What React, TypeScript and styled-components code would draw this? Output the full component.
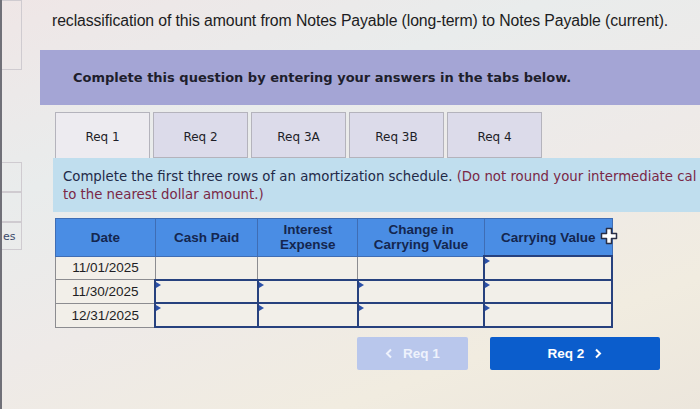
import React from "react";
import styled, { createGlobalStyle } from "styled-components";

const Global = createGlobalStyle`
  html, body { margin: 0; padding: 0; }
  body { font-family: "Liberation Sans", Arial, sans-serif; }
`;

const Page = styled.div`
  display: flex;
  width: 700px;
  height: 409px;
  overflow: hidden;
  background: linear-gradient(160deg, #efe6e6 0%, #e9ecec 30%, #eeeae8 55%, #f1ece0 80%, #ece6dc 100%);
`;

const Sidebar = styled.div`
  width: 20px;
  flex-shrink: 0;
  border-left: 2px solid #707078;
  display: flex;
  flex-direction: column;
`;

const SideBox = styled.div<{ $h: number; $mt?: number }>`
  height: ${(p) => p.$h}px;
  margin-top: ${(p) => p.$mt ?? 0}px;
  border: 1px solid #cfcbd0;
  border-left: none;
  box-sizing: border-box;
  overflow: hidden;
  display: flex;
  align-items: center;
  padding-left: 1px;
  font-family: "DejaVu Sans", Verdana, sans-serif;
  font-size: 11px;
  color: #3a4a6a;
  white-space: nowrap;
`;

const Main = styled.div`
  flex: 1;
  min-width: 0;
  padding-left: 18px;
  overflow: hidden;
`;

const Intro = styled.div`
  margin: 12px 0 0 12px;
  font-family: "Liberation Sans", Arial, sans-serif;
  font-size: 15.8px;
  line-height: 18px;
  color: #1c1c22;
  white-space: nowrap;
  letter-spacing: -0.1px;
`;

const Banner = styled.div`
  margin-top: 20px;
  width: 720px;
  height: 55px;
  box-sizing: border-box;
  padding-left: 33px;
  display: flex;
  align-items: center;
  background: #a4a5d5;
  font-family: "DejaVu Sans", Verdana, sans-serif;
  font-weight: bold;
  font-size: 13px;
  color: #1e1e2c;
  white-space: nowrap;
`;

const Tabs = styled.div`
  margin: 7px 0 0 15px;
  display: flex;
  gap: 3px;
`;

const Tab = styled.div<{ $active?: boolean }>`
  width: 95px;
  height: 46px;
  box-sizing: border-box;
  border: 1px solid #b4b3bc;
  border-bottom: ${(p) => (p.$active ? "none" : "1px solid #b4b3bc")};
  background: ${(p) => (p.$active ? "#edebf0" : "#dcdbea")};
  display: flex;
  align-items: center;
  justify-content: center;
  padding-top: 3px;
  font-family: "DejaVu Sans", Verdana, sans-serif;
  font-size: 12px;
  color: #1e1e28;
`;

const Instructions = styled.div`
  margin-left: 13px;
  width: 720px;
  height: 54px;
  box-sizing: border-box;
  padding: 10px 10px 8px;
  background: #c0deee;
  font-family: "DejaVu Sans", Verdana, sans-serif;
  font-size: 13.3px;
  line-height: 18px;
  color: #1f2a48;
  white-space: nowrap;
  overflow: hidden;
`;

const Note = styled.span`
  color: #7a2846;
`;

const TableWrap = styled.div`
  position: relative;
  margin: 6px 0 0 15px;
  width: 558px;
`;

const Table = styled.table`
  border-collapse: collapse;
  table-layout: fixed;
  font-family: "Liberation Sans", Arial, sans-serif;
`;

const Th = styled.th<{ $w: number }>`
  width: ${(p) => p.$w}px;
  height: 36px;
  padding: 0;
  background: #4a8de4;
  border: 1px solid #3f6db4;
  color: #14264f;
  font-size: 13.5px;
  font-weight: bold;
  line-height: 15px;
  text-align: center;
`;

const Td = styled.td<{ $input?: boolean }>`
  position: relative;
  height: 21.7px;
  padding: 0;
  background: #f2efe9;
  border: ${(p) => (p.$input ? "2px solid #27417e" : "1px solid #8c8c90")};
  font-size: 13.5px;
  color: #1e1e24;
  text-align: center;
  &::before {
    content: "";
    display: ${(p) => (p.$input ? "block" : "none")};
    position: absolute;
    left: 0;
    top: 0;
    border-top: 3px solid transparent;
    border-bottom: 3px solid transparent;
    border-left: 5px solid #2b50a8;
    margin-top: 1px;
  }
`;

const Plus = styled.svg`
  position: absolute;
  left: 545px;
  top: 9px;
`;

const Buttons = styled.div`
  margin: 9px 0 0 317px;
  display: flex;
  gap: 22px;
  align-items: flex-start;
`;

const NavButton = styled.div<{ $w: number; $disabled?: boolean }>`
  width: ${(p) => p.$w}px;
  height: 33px;
  border-radius: 2px;
  background: ${(p) => (p.$disabled ? "#b9c7ec" : "#0b5dcc")};
  color: ${(p) => (p.$disabled ? "#eef2fc" : "#ffffff")};
  display: flex;
  align-items: center;
  justify-content: center;
  gap: 10px;
  font-family: "Liberation Sans", Arial, sans-serif;
  font-weight: bold;
  font-size: 13.5px;
`;

const rows = [
  { date: "11/01/2025", inputs: [false, false, false, true] },
  { date: "11/30/2025", inputs: [true, true, true, true] },
  { date: "12/31/2025", inputs: [true, true, true, true] },
];

const Chevron = ({ dir }: { dir: "left" | "right" }) => (
  <svg width="8" height="11" viewBox="0 0 8 11">
    <path
      d={dir === "left" ? "M6 1.5 L2 5.5 L6 9.5" : "M2 1.5 L6 5.5 L2 9.5"}
      fill="none"
      stroke="currentColor"
      strokeWidth="2"
    />
  </svg>
);

export default function App() {
  return (
    <>
      <Global />
      <Page>
        <Sidebar>
          <SideBox $h={70} />
          <SideBox $h={30} $mt={92} />
          <SideBox $h={30} />
          <SideBox $h={28}>es</SideBox>
        </Sidebar>
        <Main>
          <Intro>
            reclassification of this amount from Notes Payable (long-term) to Notes Payable (current).
          </Intro>
          <Banner>Complete this question by entering your answers in the tabs below.</Banner>
          <Tabs>
            <Tab $active>Req 1</Tab>
            <Tab>Req 2</Tab>
            <Tab>Req 3A</Tab>
            <Tab>Req 3B</Tab>
            <Tab>Req 4</Tab>
          </Tabs>
          <Instructions>
            Complete the first three rows of an amortization schedule.{" "}
            <Note>(Do not round your intermediate cal</Note>
            <br />
            <Note>to the nearest dollar amount.)</Note>
          </Instructions>
          <TableWrap>
            <Table>
              <thead>
                <tr>
                  <Th $w={99}>Date</Th>
                  <Th $w={102}>Cash Paid</Th>
                  <Th $w={99}>
                    Interest
                    <br />
                    Expense
                  </Th>
                  <Th $w={126}>
                    Change in
                    <br />
                    Carrying Value
                  </Th>
                  <Th $w={127}>Carrying Value</Th>
                </tr>
              </thead>
              <tbody>
                {rows.map((r) => (
                  <tr key={r.date}>
                    <Td>{r.date}</Td>
                    {r.inputs.map((inp, i) => (
                      <Td key={i} $input={inp} />
                    ))}
                  </tr>
                ))}
              </tbody>
            </Table>
            <Plus width="18" height="18" viewBox="0 0 18 18">
              <path
                d="M6.5 1.5 H11.5 V6.5 H16.5 V11.5 H11.5 V16.5 H6.5 V11.5 H1.5 V6.5 H6.5 Z"
                fill="#ffffff"
                stroke="#2a2f45"
                strokeWidth="1.5"
                strokeLinejoin="round"
              />
            </Plus>
          </TableWrap>
          <Buttons>
            <NavButton $w={111} $disabled>
              <Chevron dir="left" />
              Req 1
            </NavButton>
            <NavButton $w={170}>
              Req 2
              <Chevron dir="right" />
            </NavButton>
          </Buttons>
        </Main>
      </Page>
    </>
  );
}
